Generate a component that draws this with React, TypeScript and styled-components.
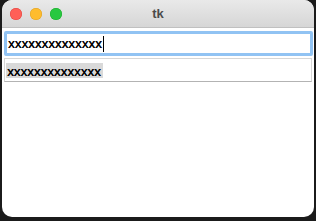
import React from "react";
import styled, { createGlobalStyle } from "styled-components";

const GlobalStyle = createGlobalStyle`
  html, body {
    margin: 0;
    padding: 0;
    background: #1b1b1b;
  }
  body {
    width: 316px;
    height: 221px;
    overflow: hidden;
    font-family: "Liberation Sans", Arial, sans-serif;
  }
`;

const Screen = styled.div`
  width: 316px;
  height: 221px;
  padding: 0 2px;
  box-sizing: border-box;
`;

const Window = styled.div`
  width: 312px;
  height: 217px;
  border-radius: 10px;
  overflow: hidden;
  background: #ffffff;
  display: flex;
  flex-direction: column;
`;

const TitleBar = styled.div`
  height: 27px;
  flex: none;
  display: flex;
  align-items: center;
  padding: 0 8px;
  position: relative;
  background: linear-gradient(#e9e9e9, #d6d6d6);
  border-bottom: 1px solid #c0c0c0;
`;

const Lights = styled.div`
  display: flex;
  gap: 8px;
`;

const Light = styled.span<{ $color: string; $edge: string }>`
  width: 12px;
  height: 12px;
  border-radius: 50%;
  background: ${(p) => p.$color};
  box-shadow: inset 0 0 0 0.5px ${(p) => p.$edge};
`;

const Title = styled.div`
  position: absolute;
  left: 0;
  right: 0;
  top: 0;
  bottom: 0;
  display: flex;
  align-items: center;
  justify-content: center;
  font-size: 13px;
  font-weight: bold;
  color: #4b4b4b;
  pointer-events: none;
`;

const Body = styled.div`
  display: flex;
  flex-direction: column;
  gap: 2px;
  padding: 3px 1px 0 2px;
`;

const Entry = styled.div`
  height: 25px;
  box-sizing: border-box;
  border: 3px solid #91c3f3;
  border-radius: 2px;
  background: #fff;
  display: flex;
  align-items: center;
  padding-left: 1px;
  font-size: 13.4px;
  color: #000;
  text-shadow: 0.35px 0 0 #000;
`;

const Caret = styled.span`
  display: inline-block;
  width: 1px;
  height: 16px;
  margin-left: 1px;
  background: #000;
`;

const Listbox = styled.div`
  height: 24px;
  margin-right: 1px;
  box-sizing: border-box;
  border: 1px solid #d6d6d6;
  border-bottom-color: #b3b3b3;
  background: #fff;
  padding: 3px 1px;
`;

const Item = styled.div<{ $selected?: boolean }>`
  display: inline-block;
  height: 15px;
  line-height: 17px;
  padding: 0 2px 0 1px;
  font-size: 13.4px;
  color: #000;
  text-shadow: 0.4px 0 0 #000;
  background: ${(p) => (p.$selected ? "#d9d9d9" : "transparent")};
`;

export default function App() {
  const value = "xxxxxxxxxxxxxx";
  return (
    <>
      <GlobalStyle />
      <Screen>
        <Window>
          <TitleBar>
            <Lights>
              <Light $color="#ff5f57" $edge="#e0443e" />
              <Light $color="#febc2e" $edge="#dea123" />
              <Light $color="#28c840" $edge="#1aab29" />
            </Lights>
            <Title>tk</Title>
          </TitleBar>
          <Body>
            <Entry>
              {value}
              <Caret />
            </Entry>
            <Listbox>
              <Item $selected>{value}</Item>
            </Listbox>
          </Body>
        </Window>
      </Screen>
    </>
  );
}
